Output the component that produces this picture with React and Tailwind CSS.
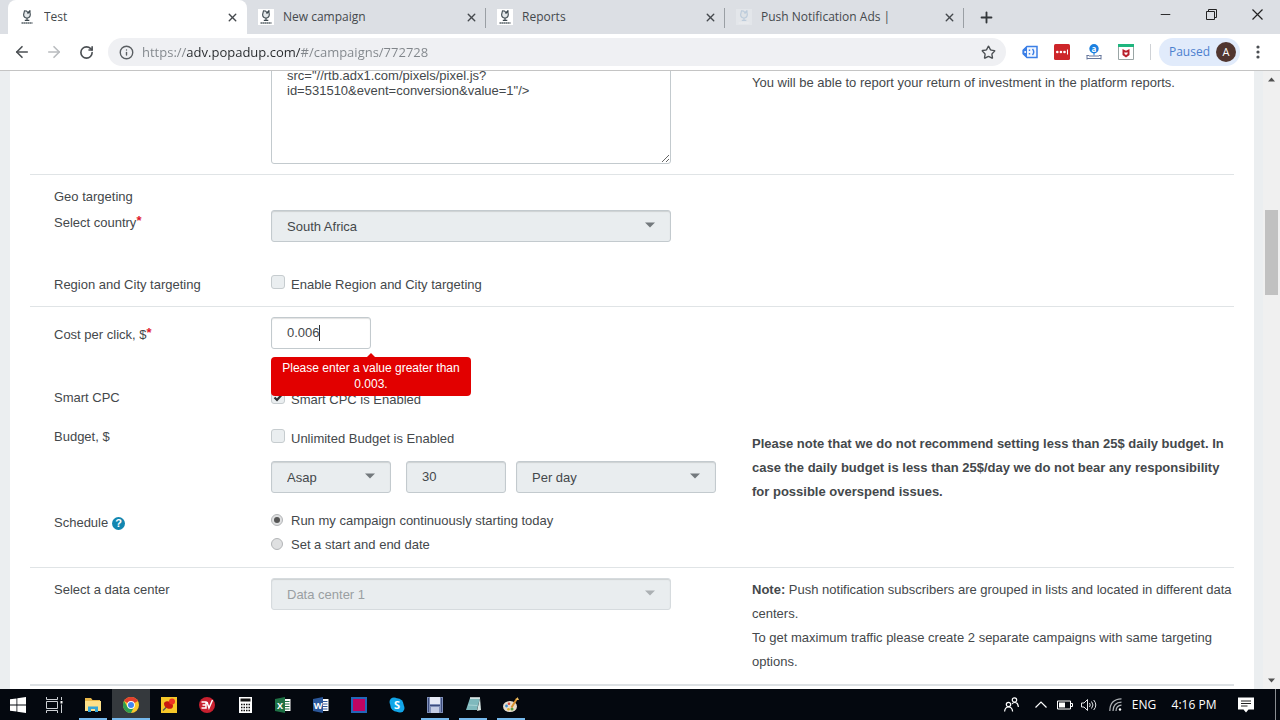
import React from "react";
import { ArrowLeft, ArrowRight, RotateCw, Info, Star, Plus, X, Minus } from "lucide-react";

const fieldBase =
  "h-8 rounded-[3px] border border-[#c3cace] text-[13px] leading-4 shadow-[inset_0_1px_1px_rgba(0,0,0,0.12)] outline-none";

/* ---------- Browser chrome ---------- */

function Favicon({ faded }) {
  return (
    <svg viewBox="0 0 16 16" className={faded ? "size-4 shrink-0 opacity-40" : "size-4 shrink-0"} aria-hidden="true">
      <rect width="16" height="16" fill="#fff" opacity={faded ? 0.5 : 1} />
      <path
        d="M5.500 1.800 4.600 5.500q0 3.300 3.400 3.500 3.200-.3 3.300-3.500L10.800 2.500 9.300 3.800 7.500 2Z"
        fill="#e3e7e9"
        stroke={faded ? "#8fb0cf" : "#4a555b"}
        strokeWidth="1.200"
      />
      <path d="m8.500 4.500 2.800-3M8 9v2M5.800 11.300h4.500" stroke={faded ? "#8fb0cf" : "#3a464d"} strokeWidth="1.200" fill="none" />
      <path d="M2.500 14h11" stroke={faded ? "#fff" : "#5a646a"} strokeWidth="1.300" strokeDasharray="1.700 .3" />
    </svg>
  );
}

function Tab({ title, active, faded }) {
  return (
    <div
      role="tab"
      aria-selected={!!active}
      className={
        "relative flex h-full w-[239px] items-center pl-[11px] pr-[7px] " +
        (active ? "rounded-t-lg bg-white" : "")
      }
    >
      <Favicon faded={faded} />
      <span className="ml-[9px] flex-1 truncate text-xs text-[#45494d]">{title}</span>
      <button type="button" aria-label={"Close " + title} className="flex size-4 items-center justify-center text-[#45494d]">
        <X size={13} strokeWidth={2.6} />
      </button>
      {!active && <span className="absolute right-0 top-2 h-5 w-px bg-[#9a9fa4]" />}
    </div>
  );
}

function TabStrip() {
  return (
    <div className="flex h-[34px] shrink-0 bg-[#dcdfe4] pl-2">
      <div role="tablist" className="flex">
        <Tab title="Test" active />
        <Tab title="New campaign" />
        <Tab title="Reports" />
        <Tab title="Push Notification Ads |" faded />
      </div>
      <button type="button" aria-label="New tab" className="flex w-11 items-center justify-center text-[#33373a]">
        <Plus size={17} strokeWidth={2.6} />
      </button>
      <div className="ml-auto flex h-7 text-[#222]">
        <button type="button" aria-label="Minimize" className="flex w-[46px] items-center justify-center">
          <Minus size={15} strokeWidth={1.5} />
        </button>
        <button type="button" aria-label="Restore" className="flex w-[46px] items-center justify-center">
          <svg width="11" height="11" viewBox="0 0 11 11" fill="none" stroke="currentColor" aria-hidden="true">
            <path d="M.5 2.500h8v8h-8zM2.500 2.500v-2h8v8h-2" />
          </svg>
        </button>
        <button type="button" aria-label="Close window" className="flex w-[46px] items-center justify-center">
          <svg width="11" height="11" viewBox="0 0 11 11" fill="none" stroke="currentColor" strokeWidth="1.200" aria-hidden="true">
            <path d="m.5.5 10 10M10.500.5l-10 10" />
          </svg>
        </button>
      </div>
    </div>
  );
}

function Extensions() {
  const cls = "flex w-8 items-center justify-center";
  return (
    <div className="flex h-7">
      <button type="button" aria-label="Tag extension" className={cls}>
        <svg width="16" height="14" viewBox="0 0 16 14" aria-hidden="true">
          <path d="M5 1.500h10v11H5L1.500 9V5Z" fill="#f2f7ff" stroke="#3b7fe6" strokeWidth="1.500" />
          <path d="M.5 5v4L5 13V1Z" fill="#3b7fe6" />
          <circle cx="3.200" cy="7" r="1" fill="#fff" />
          <path d="M7.500 4.500V6M7.500 8v1.500M10.500 4q2.500 3 0 6" stroke="#3b7fe6" strokeWidth="1.400" fill="none" />
        </svg>
      </button>
      <button type="button" aria-label="Password manager" className={cls}>
        <svg width="16" height="16" viewBox="0 0 16 16" aria-hidden="true">
          <rect width="16" height="16" rx="1.500" fill="#cd2529" />
          <circle cx="3.300" cy="8" r="1.300" fill="#fff" />
          <circle cx="6.900" cy="8" r="1.300" fill="#fff" />
          <circle cx="10.500" cy="8" r="1.300" fill="#fff" />
          <path d="M13.500 5.500v5" stroke="#fff" />
        </svg>
      </button>
      <button type="button" aria-label="Adblock" className={cls}>
        <svg width="16" height="16" viewBox="0 0 16 16" aria-hidden="true">
          <circle cx="8" cy="4.700" r="4.700" fill="#1a7fe0" />
          <text x="8" y="7.500" fontSize="8" fontWeight="bold" textAnchor="middle" fill="#fff" fontFamily="Open Sans, sans-serif">a</text>
          <path d="M8 9v2.500" stroke="#1a7fe0" />
          <path d="M1 15.500v-4M15 15.500v-4M.5 11.500H3M13 11.500h2.500M1 14.500h14M3 12h10" stroke="#66779c" fill="none" />
        </svg>
      </button>
      <button type="button" aria-label="Site advisor" className={cls}>
        <svg width="16" height="16" viewBox="0 0 16 16" aria-hidden="true">
          <path d="M.5.5h15v15H.5z" fill="#fff" stroke="#9aa5a5" />
          <path d="M0 0h16v3H0z" fill="#1fb57e" />
          <path d="m4.500 5 3.500 1.800L11.500 5v6L8 13.500 4.500 11Z" fill="#b8202c" />
          <path d="m6.500 8 1.500.8L9.500 8v2L8 11l-1.500-1Z" fill="#fff" />
        </svg>
      </button>
    </div>
  );
}

function Toolbar() {
  const nav = "flex w-8 items-center justify-center";
  return (
    <div className="flex h-9 shrink-0 items-center bg-white pl-1.5 pr-2.5">
      <button type="button" aria-label="Back" className={nav + " text-[#4b4f53]"}>
        <ArrowLeft size={18} strokeWidth={2.2} />
      </button>
      <button type="button" aria-label="Forward" className={nav + " text-[#b9bcbf]"}>
        <ArrowRight size={18} strokeWidth={2.2} />
      </button>
      <button type="button" aria-label="Reload" className={nav + " text-[#4b4f53]"}>
        <RotateCw size={15} strokeWidth={2.6} />
      </button>
      <div className="ml-1.5 flex h-7 flex-1 items-center rounded-full bg-[#eff0f3] pl-[11px] pr-2.5">
        <Info size={15} strokeWidth={2.2} className="shrink-0 text-[#5a5e62]" />
        <input
          type="text"
          aria-label="Address"
          defaultValue="https://adv.popadup.com/#/campaigns/772728"
          className="ml-2 h-6 min-w-0 flex-1 bg-[linear-gradient(to_right,#80858a_45px,#26292c_45px,#26292c_158px,#80858a_158px)] bg-clip-text text-[13px] text-transparent outline-none"
        />
        <button type="button" aria-label="Bookmark this page" className="text-[#4b4f53]">
          <Star size={15} strokeWidth={2.2} />
        </button>
      </div>
      <div className="ml-2 flex">
        <Extensions />
      </div>
      <span className="ml-2 h-4 w-px bg-[#cfd2d6]" />
      <button type="button" className="ml-2 flex h-7 items-center gap-1.5 rounded-full bg-[#e1ebfb] pl-2.5 pr-1 text-xs text-[#4c80cf]">
        Paused
        <span className="flex size-5 items-center justify-center rounded-full bg-[#513630] text-[11px] text-white">A</span>
      </button>
      <button type="button" aria-label="Menu" className="ml-1.5 flex w-6 items-center justify-center">
        <svg width="4" height="14" viewBox="0 0 4 14" fill="#4b4f53" aria-hidden="true">
          <circle cx="2" cy="2" r="1.600" />
          <circle cx="2" cy="7" r="1.600" />
          <circle cx="2" cy="12" r="1.600" />
        </svg>
      </button>
    </div>
  );
}

/* ---------- Form ---------- */

function Row({ label, note, className = "", labelClass = "", noteClass = "", children }) {
  return (
    <div className={"grid grid-cols-[217px_481px_1fr] pl-6 " + className}>
      <div className={labelClass}>{label}</div>
      <div>{children}</div>
      <div className={noteClass}>{note}</div>
    </div>
  );
}

function Required() {
  return <b className="relative -top-0.5 font-bold text-[#e0182d]">*</b>;
}

function Select({ id, label, value, className, disabled }) {
  return (
    <div className={"relative " + className}>
      <select
        id={id}
        aria-label={label}
        disabled={disabled}
        className={
          fieldBase +
          " w-full appearance-none bg-[#e9edef] pl-[15px] pr-8 pt-0.5 disabled:border-[#d6dbde] disabled:text-[#9a9fa2] disabled:opacity-100"
        }
      >
        <option>{value}</option>
      </select>
      <svg width="10" height="6" viewBox="0 0 10 6" className="pointer-events-none absolute right-4 top-3" aria-hidden="true">
        <path d="M0 .5h10L5 5.500Z" fill={disabled ? "#abb0b3" : "#73797d"} />
      </svg>
    </div>
  );
}

function Check({ label, checked }) {
  return (
    <label className="flex h-6 items-center">
      <span className="relative -mt-1.5 mr-1.5 size-3.5">
        <input
          type="checkbox"
          defaultChecked={checked}
          className="peer block size-3.5 appearance-none rounded-[3px] border border-[#c6cccf] bg-[#eaeef0]"
        />
        <svg viewBox="0 0 14 14" className="pointer-events-none absolute inset-0 hidden size-3.5 peer-checked:block" aria-hidden="true">
          <path d="m3.500 7.500 2.500 2.500 4.500-5" fill="none" stroke="#2c2f31" strokeWidth="2.200" />
        </svg>
      </span>
      {label}
    </label>
  );
}

function Radio({ label, checked }) {
  return (
    <label className="flex h-6 items-center">
      <span className="relative -mt-0.5 mr-2 size-3">
        <input
          type="radio"
          name="schedule"
          defaultChecked={checked}
          className="peer block size-3 appearance-none rounded-full border border-[#b3b5b7] bg-[#dfe0e1]"
        />
        <span className="pointer-events-none absolute inset-[3px] hidden rounded-full bg-[#555] peer-checked:block" />
      </span>
      {label}
    </label>
  );
}

function CampaignForm() {
  return (
    <form className="flex-1 bg-white px-5">
      <section className="-mt-5 border-b border-[#e0e4e6] pb-2.5">
        <Row
          noteClass="pt-5"
          note="You will be able to report your return of investment in the platform reports."
        >
          <textarea
            aria-label="Conversion pixel"
            className="block h-[113px] w-[400px] resize rounded-[3px] border border-[#c3cace] px-[15px] pt-px text-[13px] leading-[15px] outline-none"
            defaultValue={'<img\nsrc="//rtb.adx1.com/pixels/pixel.js?\nid=531510&event=conversion&value=1"/>'}
          />
        </Row>
      </section>

      <section className="border-b border-[#e0e4e6] pb-2.5 pt-2.5">
        <Row className="h-6" label="Geo targeting" />
        <Row
          className="h-16 pt-px"
          label={
            <label htmlFor="country" className="block pt-px">
              Select country
              <Required />
            </label>
          }
        >
          <Select id="country" value="South Africa" className="w-[400px]" />
        </Row>
        <Row className="h-[23px]" label="Region and City targeting">
          <Check label="Enable Region and City targeting" />
        </Row>
      </section>

      <section className="border-b border-[#e0e4e6] pb-2.5 pt-2.5">
        <Row
          className="h-[69px]"
          labelClass="pt-[6px]"
          label={
            <label htmlFor="cpc">
              Cost per click, $<Required />
            </label>
          }
        >
          <div className="relative w-[100px]">
            <input id="cpc" defaultValue="0.006" aria-describedby="cpc-error" className={fieldBase + " block w-full bg-white px-[15px] pb-0.5"} />
            <span className="absolute left-12 top-2 h-4 w-px bg-[#333]" />
            <div
              id="cpc-error"
              role="alert"
              className="absolute left-0 top-10 z-10 w-[200px] rounded bg-[#e20000] px-2 pb-1 pt-[3px] text-center text-xs leading-4 text-white"
            >
              <svg width="10" height="5" viewBox="0 0 10 5" className="absolute -top-1 left-[95px]" aria-hidden="true">
                <path d="M0 5 5 0l5 5Z" fill="#e20000" />
              </svg>
              Please enter a value greater than 0.003.
            </div>
          </div>
        </Row>
        <Row className="h-[39px]" label="Smart CPC">
          <div className="pt-0.5">
            <Check label="Smart CPC is Enabled" checked />
          </div>
        </Row>
        <Row
          className="h-[84px]"
          label="Budget, $"
          noteClass="pt-[7px] font-bold pr-1"
          note="Please note that we do not recommend setting less than 25$ daily budget. In case the daily budget is less than 25$/day we do not bear any responsibility for possible overspend issues."
        >
          <div className="pt-0.5">
            <Check label="Unlimited Budget is Enabled" />
          </div>
          <div className="flex pt-2.5">
            <Select label="Budget start" value="Asap" className="w-[120px]" />
            <input aria-label="Budget amount" defaultValue="30" className={fieldBase + " ml-[15px] w-[100px] bg-[#e9edef] px-[15px] pb-0.5"} />
            <Select label="Budget period" value="Per day" className="ml-2.5 w-[200px]" />
          </div>
        </Row>
        <Row
          labelClass="pt-0.5"
          label={
            <span className="flex items-center gap-1">
              Schedule
              <button type="button" aria-label="Schedule help" className="flex size-[13px] items-center justify-center rounded-full bg-[#1286b0] text-[11px] font-bold leading-none text-white">
                ?
              </button>
            </span>
          }
        >
          <Radio label="Run my campaign continuously starting today" checked />
          <Radio label="Set a start and end date" />
        </Row>
      </section>

      <section className="border-b-2 border-[#dde1e4] pb-2.5 pt-2.5">
        <Row
          label={<label htmlFor="datacenter">Select a data center</label>}
          note={
            <>
              <p>
                <b>Note:</b> Push notification subscribers are grouped in lists and located in different data centers.
              </p>
              <p>To get maximum traffic please create 2 separate campaigns with same targeting options.</p>
            </>
          }
        >
          <Select id="datacenter" value="Data center 1" className="w-[400px]" disabled />
        </Row>
      </section>
    </form>
  );
}

function Scrollbar() {
  return (
    <div className="flex w-[17px] shrink-0 flex-col items-center bg-[#f0f0f0]" aria-hidden="true">
      <svg width="17" height="17" viewBox="0 0 17 17">
        <path d="M5 10.500h7L8.500 6.500Z" fill="#505050" />
      </svg>
      <div className="mt-[122px] h-[85px] w-[13px] bg-[#c1c1c1]" />
      <svg width="17" height="17" viewBox="0 0 17 17" className="mt-auto">
        <path d="M5 6.500h7L8.500 10.500Z" fill="#505050" />
      </svg>
    </div>
  );
}

/* ---------- Taskbar ---------- */

const Doc = ({ color, letter }) => (
  <svg width="16" height="16" viewBox="0 0 16 16" aria-hidden="true">
    <path d="M8 2h7.500v12H8z" fill="#fff" />
    <path d="M10 4.500h4.500M10 7h4.500M10 9.500h4.500M10 12h4.500" stroke={color} />
    <path d="M0 2 10 0v16L0 14Z" fill={color} />
    <text x="5" y="11.500" fontSize="9" fontWeight="bold" textAnchor="middle" fill="#fff" fontFamily="Open Sans, sans-serif">
      {letter}
    </text>
  </svg>
);

const apps = [
  {
    name: "File Explorer",
    open: true,
    icon: (
      <svg width="16" height="14" viewBox="0 0 16 14" aria-hidden="true">
        <path d="M0 0h6l1.500 2H15v3H0Z" fill="#e9b84b" />
        <path d="M0 3h16v10H0Z" fill="#fde089" />
        <path d="M3 14V8.500h10V14h-3v-3H6v3Z" fill="#35a5d8" />
      </svg>
    ),
  },
  {
    name: "Chrome",
    open: true,
    current: true,
    icon: (
      <svg width="16" height="16" viewBox="0 0 16 16" aria-hidden="true">
        <circle cx="8" cy="8" r="8" fill="#fbc82e" />
        <path d="M8 8 1.070 4A8 8 0 0 1 14.930 4Z" fill="#e2402f" />
        <path d="M1.070 4A8 8 0 0 0 8 16l3-6H4.500Z" fill="#2f9e4f" />
        <circle cx="8" cy="8" r="3.900" fill="#fff" />
        <circle cx="8" cy="8" r="3" fill="#4285f4" />
      </svg>
    ),
  },
  {
    name: "Pin board",
    icon: (
      <svg width="16" height="16" viewBox="0 0 16 16" aria-hidden="true">
        <rect width="16" height="16" fill="#f6c728" />
        <path d="m2 13.500 4-4" stroke="#555" strokeWidth="1.300" />
        <ellipse cx="7.500" cy="8" rx="4.800" ry="3.500" transform="rotate(30 7.500 8)" fill="#c9180f" />
        <circle cx="11" cy="4.500" r="3" fill="#ee3424" />
      </svg>
    ),
  },
  {
    name: "Expressway",
    icon: (
      <svg width="16" height="16" viewBox="0 0 16 16" aria-hidden="true">
        <circle cx="8" cy="8" r="8" fill="#c8202f" />
        <path d="M2.500 5H7v6H2.500M3.500 8H7M8 5l2 6 3.500-8" stroke="#fff" strokeWidth="1.500" fill="none" />
      </svg>
    ),
  },
  {
    name: "Calculator",
    icon: (
      <svg width="13" height="16" viewBox="0 0 13 16" aria-hidden="true">
        <rect width="13" height="16" fill="#fff" />
        <path d="M1.500 1.500h10v3h-10z" fill="#111" />
        <path d="M2 7.500h9M2 10.500h9M2 13.500h9" stroke="#111" strokeWidth="1.500" strokeDasharray="1.500 1" />
      </svg>
    ),
  },
  { name: "Excel", icon: <Doc color="#1e7145" letter="X" /> },
  { name: "Word", icon: <Doc color="#2b579a" letter="W" /> },
  {
    name: "Editor",
    icon: (
      <svg width="16" height="16" viewBox="0 0 16 16" aria-hidden="true">
        <path d="M1 1h14v14H1z" fill="#c00462" stroke="#2466b8" strokeWidth="2" />
      </svg>
    ),
  },
  {
    name: "Skype",
    icon: (
      <svg width="16" height="16" viewBox="0 0 16 16" aria-hidden="true">
        <circle cx="8" cy="8" r="6.700" fill="#12a5e8" />
        <circle cx="5" cy="5" r="4.500" fill="#12a5e8" />
        <circle cx="11" cy="11" r="4.500" fill="#12a5e8" />
        <text x="8" y="12" fontSize="11" fontWeight="bold" textAnchor="middle" fill="#fff" fontFamily="Open Sans, sans-serif">
          S
        </text>
      </svg>
    ),
  },
  {
    name: "Save tool",
    open: true,
    icon: (
      <svg width="16" height="16" viewBox="0 0 16 16" aria-hidden="true">
        <path d="M0 0h16v16H0z" fill="#7f8fb8" />
        <path d="M3 0h10v7H3z" fill="#e6eaf6" />
        <path d="M4 10h8v6H4z" fill="#c3cce4" />
        <path d="M1.500 1v14M14.500 1v14M3 8.500h10" stroke="#3c4c7d" />
      </svg>
    ),
  },
  {
    name: "Notepad",
    open: true,
    icon: (
      <svg width="16" height="15" viewBox="0 0 16 15" aria-hidden="true">
        <path d="M5 1h10l-3 12H1Z" fill="#7fb9bd" />
        <path d="m15 1 1 12-4 1Z" fill="#d8e6e4" />
        <path d="M5 1h10" stroke="#eef4f4" strokeWidth="1.500" />
        <path d="m3 8 9 .5" stroke="#a8d3d5" />
      </svg>
    ),
  },
  {
    name: "Paint",
    open: true,
    icon: (
      <svg width="16" height="16" viewBox="0 0 16 16" aria-hidden="true">
        <ellipse cx="7" cy="9.500" rx="7" ry="5.500" fill="#e8dccb" />
        <circle cx="3.500" cy="9" r="1.400" fill="#3d8fd1" />
        <circle cx="6" cy="6.800" r="1.300" fill="#d84a3a" />
        <circle cx="9" cy="12" r="1.500" fill="#5a9e42" />
        <circle cx="5.500" cy="12.300" r="1.300" fill="#e2b02c" />
        <path d="M8.500 10.500 14 1.500" stroke="#d8902e" strokeWidth="2" />
        <path d="m13 3 1.500-3L16 3Z" fill="#e9bd63" />
      </svg>
    ),
  },
];

function Taskbar() {
  const tray = "flex items-center justify-center";
  return (
    <footer className="flex h-[31px] shrink-0 bg-[#04080f] text-white">
      <button type="button" aria-label="Start" className={tray + " w-[35px]"}>
        <svg width="16" height="16" viewBox="0 0 16 16" fill="#fff" aria-hidden="true">
          <path d="M0 2.300 6.500 1.400v6.200H0zM7.300 1.300 16 0v7.600H7.300zM0 8.400h6.500v6.200L0 13.700zM7.300 8.400H16V16l-8.700-1.300z" />
        </svg>
      </button>
      <button type="button" aria-label="Task view" className={tray + " w-[39px]"}>
        <svg width="17" height="16" viewBox="0 0 17 16" fill="none" stroke="#cdd0d4" aria-hidden="true">
          <path d="M.5 0v2.500h11V0M.5 4.500h11v7H.5zM.5 16v-2.500h11V16M15.500 0v3M15.500 7.500V16" />
          <path d="M15.500 4v2.500" strokeWidth="2" stroke="#fff" />
        </svg>
      </button>
      {apps.map((app) => (
        <button
          key={app.name}
          type="button"
          aria-label={app.name}
          className={"relative w-[38px] " + tray + (app.current ? " bg-[#35393d]" : "")}
        >
          {app.icon}
          {app.open && (
            <span className={"absolute bottom-0 h-0.5 bg-[#76b9ed] " + (app.current ? "inset-x-0" : "inset-x-[5px]")} />
          )}
        </button>
      ))}

      <div className="ml-auto flex items-stretch text-xs">
        <button type="button" aria-label="People" className={tray + " w-8"}>
          <svg width="15" height="15" viewBox="0 0 15 15" fill="none" stroke="#fff" strokeWidth="1.200" aria-hidden="true">
            <circle cx="4.500" cy="7.500" r="2.200" />
            <path d="M.6 14.500q.4-4.500 4-4.500t4 4.500" />
            <circle cx="10.500" cy="3" r="2.200" />
            <path d="M8 7q1-1.500 2.800-1.500 3 0 3.600 4.500" />
          </svg>
        </button>
        <button type="button" aria-label="Show hidden icons" className={tray + " w-7"}>
          <svg width="12" height="7" viewBox="0 0 12 7" fill="none" stroke="#fff" strokeWidth="1.200" aria-hidden="true">
            <path d="M.5 6.500 6 1l5.500 5.500" />
          </svg>
        </button>
        <button type="button" aria-label="Battery" className={tray + " w-5"}>
          <svg width="16" height="10" viewBox="0 0 16 10" aria-hidden="true">
            <path d="M.5 1h13v8H.5zM14 3.500h1.500v3H14" fill="none" stroke="#fff" />
            <path d="M2 2.500h6v5H2z" fill="#fff" />
          </svg>
        </button>
        <button type="button" aria-label="Volume" className={tray + " w-7"}>
          <svg width="16" height="12" viewBox="0 0 16 12" fill="none" stroke="#e4e6e8" aria-hidden="true">
            <path d="M.5 4H3l3.500-3.500v11L3 8H.5ZM8.500 4q1.500 2 0 4M10.500 2.500q3 3.500 0 7M12.700 1q4.200 5 0 10" />
          </svg>
        </button>
        <button type="button" aria-label="Network" className={tray + " w-6"}>
          <svg width="13" height="13" viewBox="0 0 13 13" fill="none" stroke="#aeb2b6" strokeWidth="1.200" aria-hidden="true">
            <path d="M.8 13Q1 1 12.500.8M4 13q.2-8.500 8.500-8.800M7 13q.2-5.500 5.500-5.800" />
            <circle cx="11" cy="11.500" r="1.200" fill="#fff" stroke="none" />
          </svg>
        </button>
        <button type="button" className={tray + " w-[34px]"}>ENG</button>
        <button type="button" className={tray + " w-[66px]"}>4:16 PM</button>
        <button type="button" aria-label="Notifications" className={tray + " w-[38px]"}>
          <svg width="16" height="16" viewBox="0 0 16 16" aria-hidden="true">
            <path d="M0 .5h16v12h-5.500L8 15.500l-2.500-3H0Z" fill="#fff" />
            <path d="M3 4h10M3 6.500h10M3 9h6.500" stroke="#222" />
          </svg>
        </button>
        <span className="ml-2.5 mr-1 w-px bg-[#8a8d91]" />
      </div>
    </footer>
  );
}

export default function App() {
  return (
    <div className="flex h-screen flex-col overflow-hidden bg-white font-['Open_Sans','Noto_Sans',sans-serif]">
      <TabStrip />
      <Toolbar />
      <main className="flex min-h-0 flex-1 overflow-hidden border-t border-[#c4c4c4] bg-[#ebeef0] pl-2.5 font-['Liberation_Sans',Arial,sans-serif] text-[13px] leading-6 text-[#44484b]">
        <CampaignForm />
        <div className="w-[9px] shrink-0" />
        <Scrollbar />
      </main>
      <Taskbar />
    </div>
  );
}
